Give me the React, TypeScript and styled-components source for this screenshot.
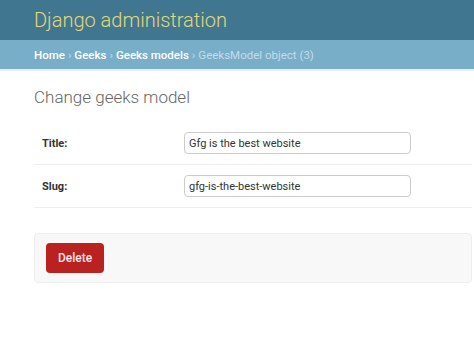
import React from 'react'
import styled, { createGlobalStyle } from 'styled-components'

const GlobalStyle = createGlobalStyle`
  html, body {
    margin: 0;
    padding: 0;
    background: #fff;
    font-family: Roboto, "Liberation Sans", Arial, sans-serif;
    color: #333;
  }
  * {
    box-sizing: border-box;
  }
`

const Header = styled.header`
  height: 40px;
  background: #417690;
  display: flex;
  align-items: center;
  padding: 0 34px;
`

const Branding = styled.h1`
  margin: 0;
  font-size: 20px;
  font-weight: 300;
  color: #e2d97a;
`

const Breadcrumbs = styled.nav`
  height: 31px;
  background: #79aec8;
  border-bottom: 2px solid #e3eef4;
  display: flex;
  align-items: center;
  padding: 0 34px;
  font-size: 11.5px;
  color: #c4dce8;
`

const Crumb = styled.a`
  color: #fff;
  font-weight: 500;
  text-decoration: none;
`

const Sep = styled.span`
  color: #c4dce8;
  margin: 0 3px;
`

const Content = styled.main`
  padding: 15px 2px 0 34px;
`

const Title = styled.h2`
  margin: 0 0 14px;
  font-size: 17px;
  font-weight: 300;
  color: #666;
  line-height: 22px;
`

const Fieldset = styled.div`
  display: flex;
  flex-direction: column;
`

const FormRow = styled.div`
  display: flex;
  align-items: center;
  padding: 10px 8px;
  border-bottom: 1px solid #eee;
`

const Label = styled.label`
  width: 142px;
  font-size: 11px;
  font-weight: 700;
  color: #333;
`

const Input = styled.input`
  width: 227px;
  height: 22px;
  border: 1px solid #ccc;
  border-radius: 4px;
  padding: 0 4px;
  font-family: Roboto, "Liberation Sans", Arial, sans-serif;
  font-size: 11px;
  color: #333;
  outline: none;
`

const SubmitRow = styled.div`
  margin-top: 25px;
  display: flex;
  align-items: center;
  padding: 9px 11px;
  background: #f8f8f8;
  border: 1px solid #eee;
  border-radius: 4px;
`

const DeleteButton = styled.button`
  height: 30px;
  width: 58px;
  border: none;
  border-radius: 4px;
  background: #ba2121;
  color: #fbe9e9;
  font-family: Roboto, "Liberation Sans", Arial, sans-serif;
  font-size: 12px;
  font-weight: 500;
  cursor: pointer;
`

const fields = [
  { label: 'Title:', value: 'Gfg is the best website' },
  { label: 'Slug:', value: 'gfg-is-the-best-website' }
]

export default function App() {
  return (
    <>
      <GlobalStyle />
      <Header>
        <Branding>Django administration</Branding>
      </Header>
      <Breadcrumbs>
        <Crumb href="#">Home</Crumb>
        <Sep>›</Sep>
        <Crumb href="#">Geeks</Crumb>
        <Sep>›</Sep>
        <Crumb href="#">Geeks models</Crumb>
        <Sep>›</Sep>
        <span>GeeksModel object (3)</span>
      </Breadcrumbs>
      <Content>
        <Title>Change geeks model</Title>
        <Fieldset>
          {fields.map((f) => (
            <FormRow key={f.label}>
              <Label>{f.label}</Label>
              <Input defaultValue={f.value} />
            </FormRow>
          ))}
        </Fieldset>
        <SubmitRow>
          <DeleteButton>Delete</DeleteButton>
        </SubmitRow>
      </Content>
    </>
  )
}
